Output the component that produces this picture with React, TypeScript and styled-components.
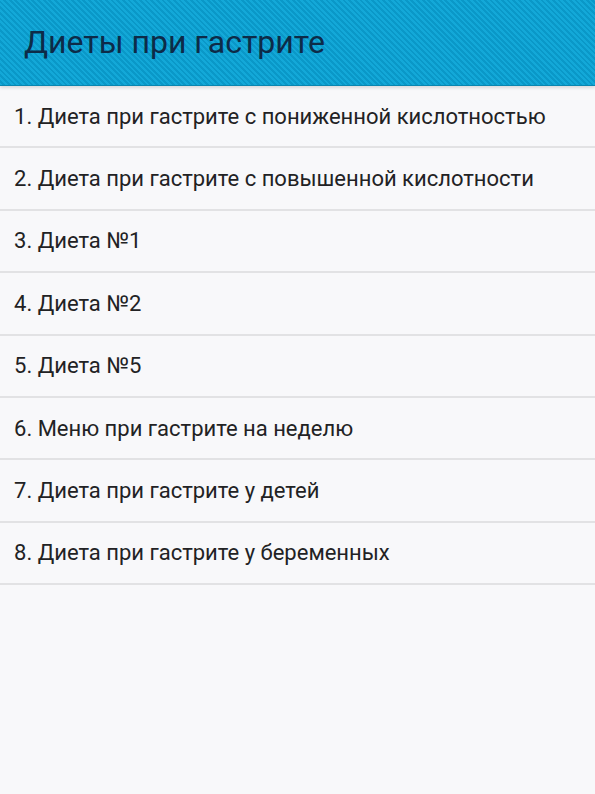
import React from 'react';
import styled, { createGlobalStyle } from 'styled-components';

const DIETS = [
  'Диета при гастрите с пониженной кислотностью',
  'Диета при гастрите с повышенной кислотности',
  'Диета №1',
  'Диета №2',
  'Диета №5',
  'Меню при гастрите на неделю',
  'Диета при гастрите у детей',
  'Диета при гастрите у беременных',
];

const GlobalStyle = createGlobalStyle`
  html, body {
    margin: 0;
    padding: 0;
    background: #f8f8fa;
  }

  body {
    font-family: Roboto, "Noto Sans", sans-serif;
  }
`;

export default function App() {
  return (
    <>
      <GlobalStyle />
      <Screen>
        <ActionBar>
          <Title>Диеты при гастрите</Title>
        </ActionBar>
        <DietList>
          {DIETS.map((name, i) => (
            <DietItem key={name}>{i + 1}. {name}</DietItem>
          ))}
        </DietList>
      </Screen>
    </>
  );
}

const Screen = styled.div`
  width: 595px;
  min-height: 794px;
  display: flex;
  flex-direction: column;
  background: #f8f8fa;
`;

const ActionBar = styled.header`
  height: 86px;
  display: flex;
  align-items: center;
  padding: 0 24px 2px;
  box-sizing: border-box;
  background: repeating-linear-gradient(
    45deg,
    #13a8d8 0px,
    #13a8d8 2px,
    #0a98c8 2px,
    #0a98c8 4px
  );
  border-bottom: 1px solid #0a86b0;
  box-shadow: 0 2px 3px rgba(0, 0, 0, 0.12);
  position: relative;
  z-index: 1;
`;

const Title = styled.h1`
  margin: 0;
  font-size: 32px;
  font-weight: 400;
  color: #0d2b48;
`;

const DietList = styled.ul`
  margin: 0;
  padding: 0;
  list-style: none;
`;

const DietItem = styled.li`
  height: 62.4px;
  box-sizing: border-box;
  display: flex;
  align-items: center;
  padding: 0 14px;
  font-size: 22px;
  color: #222224;
  border-bottom: 2px solid #e2e2e4;
`;
